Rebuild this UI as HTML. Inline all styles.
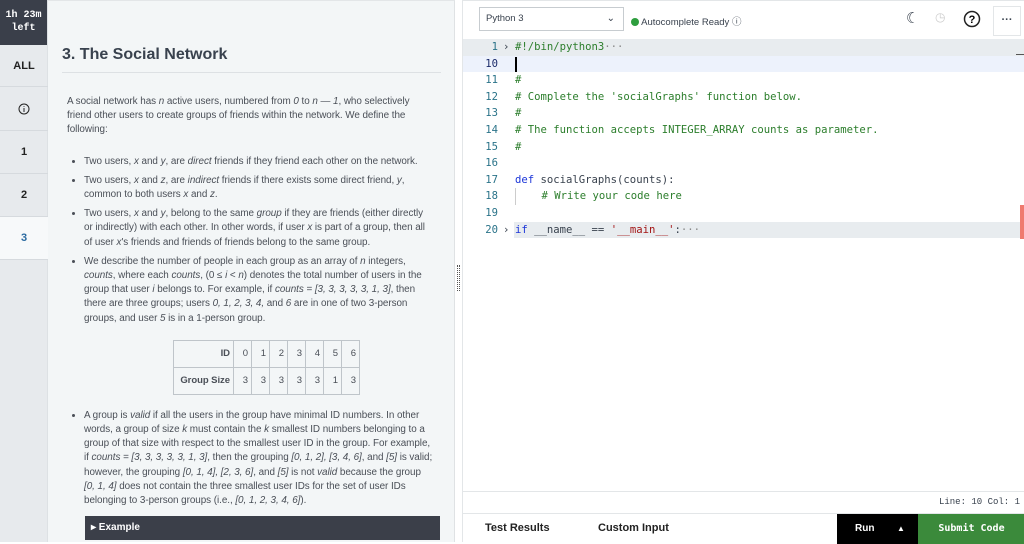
<!DOCTYPE html>
<html><head><style>
*{margin:0;padding:0;box-sizing:border-box}
body{width:1024px;height:542px;overflow:hidden;font-family:"Liberation Sans",sans-serif;background:#fff;position:relative;color:#39424e}
.nav{position:absolute;left:0;top:0;width:48px;height:542px;background:#e7eaed;border-right:1px solid #dde1e4}
.timer{height:45px;background:#3a3f4a;color:#fff;font:bold 10px "Liberation Mono",monospace;text-align:center;padding-top:9px;line-height:13px}
.ni{position:absolute;left:0;width:48px;height:43px;border-bottom:1px solid #d6dade;text-align:center;font-weight:bold;font-size:11px;color:#222;line-height:43px}
.prob{position:absolute;left:48px;top:0;width:407px;height:542px;background:#f3f6f7;border-top:1px solid #e3e6e8;border-right:1px solid #dfe2e4}
h1{position:absolute;left:14px;top:45px;font-size:16px;color:#39424e}
.hr{position:absolute;left:14px;top:71px;width:379px;height:1px;background:#dde1e4}
.txt{position:absolute;left:19px;top:94px;width:366px;font-size:9.9px;line-height:14.2px;color:#4a4f57;letter-spacing:-0.05px}
ul{margin-top:17px;padding-left:17px}
li{margin-bottom:5px}
table{border-collapse:collapse;margin:14px 0 14px 106px;font-size:9.5px;white-space:nowrap}
td{border:1px solid #bfc5ca;height:27px;padding:0 3px;text-align:right;width:18px}
td.h{font-weight:bold;width:60px}
.ex{position:absolute;left:37px;top:515px;width:355px;height:24px;background:#3b3f49;color:#fff;font-weight:bold;font-size:10px;line-height:24px;padding-left:6px}
.ed{position:absolute;left:462px;top:0;width:562px;height:542px;border-top:1px solid #e3e6e8;border-left:1px solid #e3e6e8}
.sel{position:absolute;left:16px;top:6px;width:145px;height:24px;border:1px solid #c7ccd0;font-size:9.5px;line-height:22px;padding-left:6px}
.code{position:absolute;left:0;top:38px;width:562px;font:10.6px "DejaVu Sans Mono","Liberation Mono",monospace}
.ln{height:16.6px;line-height:16.6px;position:relative;white-space:pre}
.ln b{position:absolute;left:0;width:35px;text-align:right;font-weight:normal;color:#2a7389}
.ln span.c{position:absolute;left:52px}
.g{color:#2c7e2c}.k{color:#1b35d8}.r{color:#a31515}
.bot{position:absolute;left:0;top:512px;width:562px;height:30px;border-top:1px solid #e3e6e8}
</style></head><body>
<div class="nav">
<div class="timer">1h 23m<br>left</div>
<div class="ni" style="top:45px;height:42px;line-height:42px">ALL</div>
<div class="ni" style="top:88px"><svg width="12" height="12" viewBox="0 0 12 12" style="vertical-align:middle"><circle cx="6" cy="6" r="5" fill="none" stroke="#222"/><path d="M6 5v4M6 3v.8" stroke="#222"/></svg></div>
<div class="ni" style="top:131px">1</div>
<div class="ni" style="top:174px">2</div>
<div class="ni" style="top:217px;background:#f7f9fa;color:#2a6aa0">3</div>
</div>
<div class="prob">
<h1>3. The Social Network</h1><div class="hr"></div>
<div class="txt">A social network has <i>n</i> active users, numbered from <i>0</i> to <i>n — 1</i>, who selectively friend other users to create groups of friends within the network. We define the following:
<ul>
<li>Two users, <i>x</i> and <i>y</i>, are <i>direct</i> friends if they friend each other on the network.</li>
<li>Two users, <i>x</i> and <i>z</i>, are <i>indirect</i> friends if there exists some direct friend, <i>y</i>, common to both users <i>x</i> and <i>z</i>.</li>
<li>Two users, <i>x</i> and <i>y</i>, belong to the same <i>group</i> if they are friends (either directly or indirectly) with each other. In other words, if user <i>x</i> is part of a group, then all of user <i>x</i>'s friends and friends of friends belong to the same group.</li>
<li>We describe the number of people in each group as an array of <i>n</i> integers, <i>counts</i>, where each <i>counts</i>, (0 ≤ <i>i</i> &lt; <i>n</i>) denotes the total number of users in the group that user <i>i</i> belongs to. For example, if <i>counts = [3, 3, 3, 3, 3, 1, 3]</i>, then there are three groups; users <i>0, 1, 2, 3, 4,</i> and <i>6</i> are in one of two 3-person groups, and user <i>5</i> is in a 1-person group.</li>
</ul>
<table><tr><td class="h">ID</td><td>0</td><td>1</td><td>2</td><td>3</td><td>4</td><td>5</td><td>6</td></tr>
<tr><td class="h">Group Size</td><td>3</td><td>3</td><td>3</td><td>3</td><td>3</td><td>1</td><td>3</td></tr></table>
<ul style="margin-top:0"><li>A group is <i>valid</i> if all the users in the group have minimal ID numbers. In other words, a group of size <i>k</i> must contain the <i>k</i> smallest ID numbers belonging to a group of that size with respect to the smallest user ID in the group. For example, if <i>counts = [3, 3, 3, 3, 3, 1, 3]</i>, then the grouping <i>[0, 1, 2], [3, 4, 6]</i>, and <i>[5]</i> is valid; however, the grouping <i>[0, 1, 4], [2, 3, 6]</i>, and <i>[5]</i> is not <i>valid</i> because the group <i>[0, 1, 4]</i> does not contain the three smallest user IDs for the set of user IDs belonging to 3-person groups (i.e., <i>[0, 1, 2, 3, 4, 6]</i>).</li></ul>
</div>
<div class="ex">▸ Example</div>
</div>
<div style="position:absolute;left:457px;top:265px;width:3px;height:26px;border-left:1px dotted #555;border-right:1px dotted #555"></div>
<div class="ed">
<div class="sel">Python 3<span style="position:absolute;right:8px;top:0;font-size:10px">⌄</span></div>
<div style="position:absolute;left:168px;top:13px;font-size:9.5px"><span style="display:inline-block;width:8px;height:8px;border-radius:50%;background:#2e9e3e;vertical-align:-1px"></span> Autocomplete Ready ⓘ</div>
<div style="position:absolute;left:443px;top:8px;font-size:15px">☾</div>
<div style="position:absolute;left:472px;top:9px;font-size:12px;color:#ccc">◷</div>
<svg style="position:absolute;left:500px;top:9px" width="18" height="18"><circle cx="9" cy="9" r="7.5" fill="none" stroke="#222" stroke-width="1.5"/><text x="9" y="13" font-size="11" text-anchor="middle" font-family="Liberation Sans" font-weight="bold">?</text></svg>
<div style="position:absolute;left:530px;top:5px;width:28px;height:30px;border:1px solid #e3e6e8;text-align:center;font-size:11px;line-height:26px;font-weight:bold">···</div>
<div class="code">
<div class="ln" style="background:#e8ecef"><b>1</b><span style="position:absolute;left:40px">›</span><span class="c g">#!/bin/python3<span style="color:#888">···</span></span></div>
<div class="ln" style="background:#edf2fc"><b style="color:#1a2a6a">10</b><span class="c" style="border-left:2px solid #000;height:15px;top:1px"></span></div>
<div class="ln"><b>11</b><span class="c g">#</span></div>
<div class="ln"><b>12</b><span class="c g"># Complete the 'socialGraphs' function below.</span></div>
<div class="ln"><b>13</b><span class="c g">#</span></div>
<div class="ln"><b>14</b><span class="c g"># The function accepts INTEGER_ARRAY counts as parameter.</span></div>
<div class="ln"><b>15</b><span class="c g">#</span></div>
<div class="ln"><b>16</b></div>
<div class="ln"><b>17</b><span class="c"><span class="k">def</span> socialGraphs(counts):</span></div>
<div class="ln"><b>18</b><span class="c g" style="border-left:1px solid #ccc">    # Write your code here</span></div>
<div class="ln"><b>19</b></div>
<div class="ln" style="background:#e8ecef;margin-left:51px"><b style="left:-51px">20</b><span style="position:absolute;left:-11px">›</span><span class="c" style="left:1px"><span class="k">if</span> __name__ == <span class="r">'__main__'</span>:<span style="color:#888">···</span></span></div>
</div>
<div style="position:absolute;right:0;top:204px;width:4px;height:34px;background:#ef7a6f"></div>
<div style="position:absolute;right:0;top:53px;width:8px;height:1px;background:#555"></div>
<div style="position:absolute;left:0;top:490px;width:562px;height:1px;background:#e3e6e8"></div>
<div style="position:absolute;right:4px;top:496px;font:9px 'Liberation Mono',monospace">Line: 10 Col: 1</div>
<div class="bot">
<div style="position:absolute;left:22px;top:8px;font-weight:bold;font-size:11px;color:#222">Test Results</div>
<div style="position:absolute;left:135px;top:8px;font-weight:bold;font-size:11px;color:#222">Custom Input</div>
<div style="position:absolute;left:374px;top:0;width:81px;height:30px;background:#000;color:#fff;font-weight:bold;font-size:10px;line-height:30px"><span style="margin-left:18px">Run</span><span style="position:absolute;left:60px;font-size:8px">▲</span></div>
<div style="position:absolute;left:455px;top:0;width:107px;height:30px;background:#3b8a3b;color:#fff;font:bold 10px 'DejaVu Sans Mono',monospace;line-height:30px;text-align:center">Submit Code</div>
</div>
</div>
</body></html>
